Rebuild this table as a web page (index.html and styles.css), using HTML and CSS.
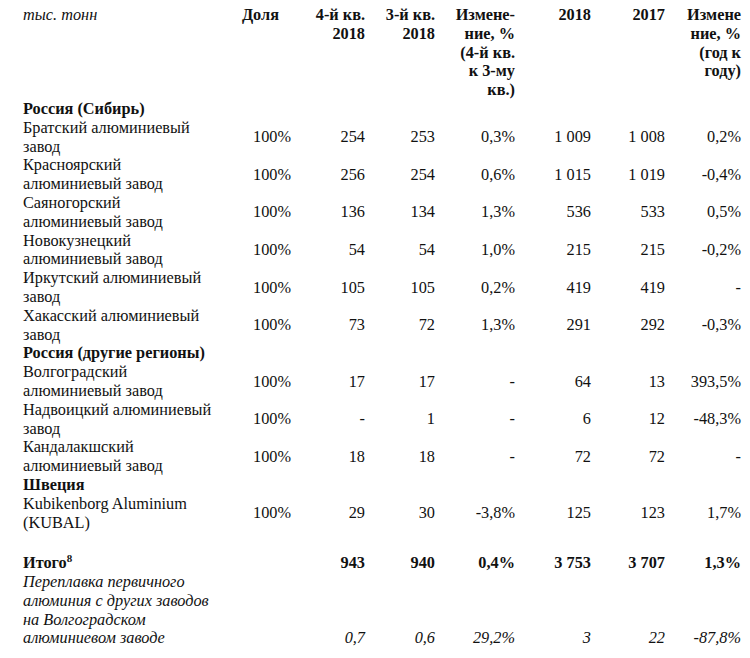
FILE: index.html
```html
<!DOCTYPE html>
<html lang="ru">
<head>
<meta charset="utf-8">
<link rel="stylesheet" href="styles.css">
</head>
<body>
<table class="prod">
  <colgroup>
    <col class="c-label"><col class="c-share"><col class="c-q4"><col class="c-q3"><col class="c-chq">
    <col class="c-y18"><col class="c-y17"><col class="c-chy">
  </colgroup>
  <thead>
    <tr class="head">
      <th class="label unit">тыс. тонн</th>
      <th class="share-h">Доля</th>
      <th>4-й кв.<br>2018</th>
      <th>3-й кв.<br>2018</th>
      <th>Измене-<br>ние, %<br>(4-й кв.<br>к 3-му<br>кв.)</th>
      <th>2018</th>
      <th>2017</th>
      <th>Измене<br>ние, %<br>(год к<br>году)</th>
    </tr>
  </thead>
  <tbody>
    <tr class="group"><td class="label" colspan="8">Россия (Сибирь)</td></tr>
    <tr><td class="label">Братский алюминиевый<br>завод</td><td>100%</td><td>254</td><td>253</td><td>0,3%</td><td>1 009</td><td>1 008</td><td>0,2%</td></tr>
    <tr><td class="label">Красноярский<br>алюминиевый завод</td><td>100%</td><td>256</td><td>254</td><td>0,6%</td><td>1 015</td><td>1 019</td><td>-0,4%</td></tr>
    <tr><td class="label">Саяногорский<br>алюминиевый завод</td><td>100%</td><td>136</td><td>134</td><td>1,3%</td><td>536</td><td>533</td><td>0,5%</td></tr>
    <tr><td class="label">Новокузнецкий<br>алюминиевый завод</td><td>100%</td><td>54</td><td>54</td><td>1,0%</td><td>215</td><td>215</td><td>-0,2%</td></tr>
    <tr><td class="label">Иркутский алюминиевый<br>завод</td><td>100%</td><td>105</td><td>105</td><td>0,2%</td><td>419</td><td>419</td><td>-</td></tr>
    <tr><td class="label">Хакасский алюминиевый<br>завод</td><td>100%</td><td>73</td><td>72</td><td>1,3%</td><td>291</td><td>292</td><td>-0,3%</td></tr>
    <tr class="group"><td class="label" colspan="8">Россия (другие регионы)</td></tr>
    <tr><td class="label">Волгоградский<br>алюминиевый завод</td><td>100%</td><td>17</td><td>17</td><td>-</td><td>64</td><td>13</td><td>393,5%</td></tr>
    <tr><td class="label">Надвоицкий алюминиевый<br>завод</td><td>100%</td><td>-</td><td>1</td><td>-</td><td>6</td><td>12</td><td>-48,3%</td></tr>
    <tr><td class="label">Кандалакшский<br>алюминиевый завод</td><td>100%</td><td>18</td><td>18</td><td>-</td><td>72</td><td>72</td><td>-</td></tr>
    <tr class="group"><td class="label" colspan="8">Швеция</td></tr>
    <tr><td class="label">Kubikenborg Aluminium<br>(KUBAL)</td><td>100%</td><td>29</td><td>30</td><td>-3,8%</td><td>125</td><td>123</td><td>1,7%</td></tr>
    <tr class="spacer"><td colspan="8"></td></tr>
    <tr class="total"><td class="label">Итого<sup>8</sup></td><td></td><td>943</td><td>940</td><td>0,4%</td><td>3 753</td><td>3 707</td><td>1,3%</td></tr>
    <tr class="remelt"><td class="label">Переплавка первичного<br>алюминия с других заводов<br>на Волгоградском<br>алюминиевом заводе</td><td></td><td>0,7</td><td>0,6</td><td>29,2%</td><td>3</td><td>22</td><td>-87,8%</td></tr>
  </tbody>
</table>
</body>
</html>
```

FILE: styles.css
```css
html, body {
  margin: 0;
  padding: 0;
  background: #ffffff;
}

body {
  font-family: "Liberation Serif", "Times New Roman", serif;
  font-size: 16.3px;
  line-height: 18.8px;
  color: #111111;
}

.prod {
  margin: 6px 0 0 23px;
  width: 718px;
  table-layout: fixed;
  border-collapse: collapse;
}

.c-label { width: 200px; }
.c-share { width: 68px; }
.c-q4 { width: 74px; }
.c-q3 { width: 70px; }
.c-chq { width: 80px; }
.c-y18 { width: 76px; }
.c-y17 { width: 74px; }
.c-chy { width: 76px; }

.prod th,
.prod td {
  padding: 0;
  text-align: right;
  vertical-align: middle;
  white-space: nowrap;
}

.prod .label {
  text-align: left;
}

.head th {
  vertical-align: top;
  font-weight: bold;
}

.head .unit {
  font-weight: normal;
  font-style: italic;
}

.head .share-h {
  padding-right: 12px;
}

.group td {
  font-weight: bold;
}

.spacer td {
  height: 18.8px;
}

.total td {
  font-weight: bold;
  vertical-align: baseline;
}

.total sup {
  font-size: 11px;
  line-height: 0;
  vertical-align: 6px;
}

.total td.label {
  padding-top: 3px;
}

.remelt td {
  font-style: italic;
  vertical-align: bottom;
}
```
